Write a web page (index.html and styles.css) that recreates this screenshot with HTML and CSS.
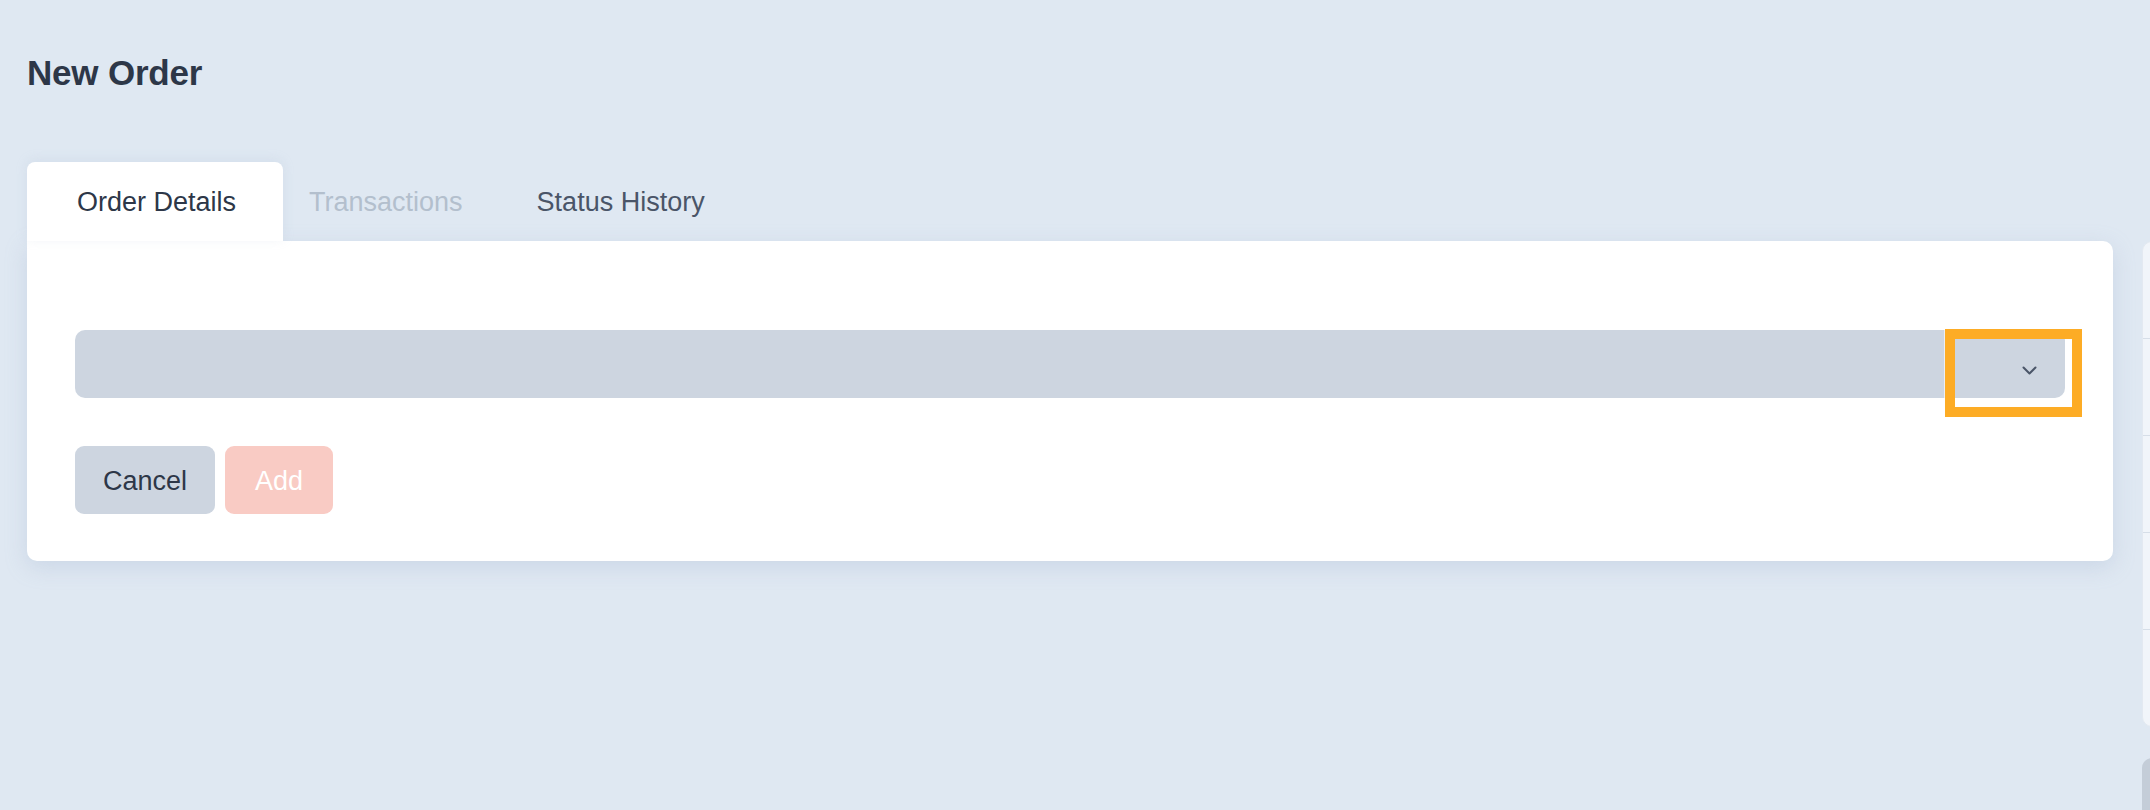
FILE: index.html
```html
<!DOCTYPE html>
<html lang="en">
<head>
    <meta charset="UTF-8">
    <meta name="viewport" content="width=device-width, initial-scale=1.0">
    <title>New Order</title>
    <link rel="stylesheet" href="styles.css">
</head>
<body>
    <div class="page">
        <h1 class="page-title">New Order</h1>
        <div class="layout">
            <div class="main">
                <div class="tabs">
                    <div class="tab tab-active">Order Details</div>
                    <div class="tab tab-disabled">Transactions</div>
                    <div class="tab">Status History</div>
                </div>
                <div class="card">
                    <div class="select">
                        <svg class="chevron" width="15" height="9" viewBox="0 0 15 9">
                            <path d="M1.5 1.5 L7.5 7.5 L13.5 1.5" fill="none" stroke="#4a5568" stroke-width="2" stroke-linecap="round" stroke-linejoin="round"/>
                        </svg>
                        <div class="highlight"></div>
                    </div>
                    <div class="actions">
                        <button class="btn btn-cancel">Cancel</button>
                        <button class="btn btn-add" disabled>Add</button>
                    </div>
                </div>
            </div>
            <aside class="side">
                <div class="side-card">
                    <div class="side-row"></div>
                    <div class="side-row"></div>
                    <div class="side-row"></div>
                    <div class="side-row"></div>
                    <div class="side-row"></div>
                </div>
                <div class="side-btn"></div>
            </aside>
        </div>
    </div>
</body>
</html>
```

FILE: styles.css
```css
body {
    margin: 0;
    padding: 0;
    font-family: "Liberation Sans", Arial, sans-serif;
    background-color: #dfe8f2;
    overflow: hidden;
    height: 810px;
}

.page {
    padding: 55px 0 0 27px;
}

.page-title {
    margin: 0;
    font-size: 35px;
    line-height: 35px;
    font-weight: bold;
    color: #2d3748;
    letter-spacing: -0.2px;
}

.layout {
    display: flex;
    gap: 29px;
    margin-top: 72px;
}

.main {
    width: 2086px;
    flex-shrink: 0;
}

.tabs {
    display: flex;
    gap: 22px;
    height: 79px;
}

.tab {
    display: flex;
    align-items: center;
    padding: 2px 26px 0;
    font-size: 27px;
    color: #4a5568;
}

.tab-active {
    padding: 2px 47px 0 50px;
    margin-right: -22px;
    background-color: #fff;
    color: #2d3748;
    border-radius: 8px 8px 0 0;
    box-shadow: 0 -2px 12px rgba(160, 180, 205, 0.18);
}

.tab-disabled {
    color: #b3bfcd;
}

.card {
    background-color: #fff;
    border-radius: 0 10px 10px 10px;
    padding: 89px 48px 47px;
    box-shadow: 0 6px 22px rgba(150, 170, 200, 0.28);
}

.select {
    position: relative;
    height: 68px;
    background-color: #cdd5e0;
    border-radius: 10px;
    display: flex;
    align-items: center;
    justify-content: flex-end;
    padding-right: 28px;
}

.chevron {
    margin-top: 13px;
}

.highlight {
    position: absolute;
    top: -1px;
    right: -17px;
    width: 137px;
    height: 88px;
    box-sizing: border-box;
    border: 10px solid #fdac25;
    box-shadow: 0 0 0 1px rgba(255, 255, 255, 0.6);
}

.highlight::before {
    content: "";
    position: absolute;
    left: 0;
    right: 0;
    top: 59px;
    bottom: 0;
    background-color: #fff;
}

.highlight::after {
    content: "";
    position: absolute;
    top: 0;
    bottom: 0;
    right: 0;
    width: 6px;
    background-color: #fff;
}

.actions {
    display: flex;
    gap: 10px;
    margin-top: 48px;
}

.btn {
    height: 68px;
    padding: 2px 28px 0;
    border: none;
    border-radius: 9px;
    font-family: "Liberation Sans", Arial, sans-serif;
    font-size: 27px;
}

.btn-cancel {
    background-color: #cdd5e0;
    color: #2d3748;
}

.btn-add {
    padding: 2px 30px 0;
    background-color: #f9cbc4;
    color: #fff;
}

.side {
    flex: 1;
    min-width: 0;
    overflow: hidden;
    padding-top: 79px;
}

.side-card {
    width: 300px;
    background-color: #f1f5fa;
    border-radius: 10px;
    border: 1px solid #e3e9f1;
}

.side-row {
    height: 96px;
    border-top: 1px solid #d6dee8;
}

.side-row:first-child {
    border-top: none;
}

.side-btn {
    width: 300px;
    margin-top: 31px;
    height: 55px;
    background-color: #c4cdd8;
    border-radius: 10px 10px 0 0;
}
```
